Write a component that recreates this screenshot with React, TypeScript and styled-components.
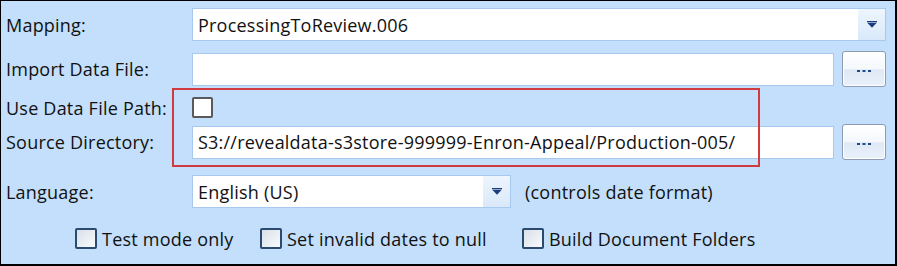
import React from "react";
import styled, { createGlobalStyle } from "styled-components";

const Global = createGlobalStyle`
  html, body { margin: 0; padding: 0; background: #ffffff; }
  #root { width: 897px; height: 266px; }
`;

const Frame = styled.div`
  position: relative;
  box-sizing: border-box;
  width: 897px;
  height: 266px;
  border: 1px solid #000;
  border-right-width: 2px;
  border-bottom-width: 2px;
  background: #c3dffb;
  padding: 7px 9px 0 5px;
  font-family: "Open Sans", "Noto Sans", sans-serif;
  font-size: 18px;
  letter-spacing: 0.22px;
  color: #111;
  display: flex;
  flex-direction: column;
`;

const Row = styled.div<{ $mt: number; $h: number }>`
  display: flex;
  align-items: center;
  margin-top: ${(p) => p.$mt}px;
  height: ${(p) => p.$h}px;
`;

const Label = styled.div`
  width: 186px;
  flex: none;
  white-space: nowrap;
`;

const Field = styled.div<{ $w?: number }>`
  box-sizing: border-box;
  height: 33px;
  ${(p) => (p.$w ? `width: ${p.$w}px; flex: none;` : "flex: 1;")}
  background: #fff;
  border: 1px solid #a8c9ef;
  display: flex;
  align-items: center;
  padding-left: 5px;
  white-space: nowrap;
  overflow: hidden;
`;

const FieldText = styled.span`
  flex: 1;
`;

const DropButton = styled.div`
  align-self: stretch;
  width: 27px;
  flex: none;
  background: linear-gradient(#eef5fd, #d9e9fa);
  display: flex;
  align-items: center;
  justify-content: center;
`;

const BrowseButton = styled.div`
  box-sizing: border-box;
  width: 44px;
  height: 36px;
  margin-left: 8px;
  flex: none;
  border: 1px solid #8b9db5;
  border-radius: 3px;
  background: linear-gradient(#ffffff 0%, #f4f8fc 50%, #dfe9f5 52%, #e9f1fa 100%);
  box-shadow: inset 0 0 0 1px #ffffff;
  display: flex;
  align-items: center;
  justify-content: center;
  padding-top: 3px;
`;

const PlainBox = styled.div`
  box-sizing: border-box;
  width: 21px;
  height: 21px;
  border: 2px solid #5a5a5a;
  border-radius: 2px;
  background: #fff;
`;

const Note = styled.div`
  margin-left: 14px;
  white-space: nowrap;
`;

const OptionRow = styled.div`
  display: flex;
  align-items: center;
  margin-top: 20px;
  height: 21px;
  padding-left: 69px;
`;

const Option = styled.label<{ $w?: number }>`
  display: flex;
  align-items: center;
  gap: 5px;
  white-space: nowrap;
  ${(p) => (p.$w ? `width: ${p.$w}px;` : "")}
`;

const OptionBox = styled.span`
  box-sizing: border-box;
  width: 22px;
  height: 21px;
  border: 2px solid #2a4a70;
  border-radius: 2px;
  background: linear-gradient(135deg, #d9e0e8, #f8fafc);
  flex: none;
`;

const Highlight = styled.div`
  position: absolute;
  left: 171px;
  top: 87px;
  width: 588px;
  height: 79px;
  box-sizing: border-box;
  border: 2px solid #d23a41;
  pointer-events: none;
`;

const Arrow = () => (
  <svg width="10" height="7" viewBox="0 0 10 7">
    <rect x="0" y="0" width="10" height="1.4" fill="#1b3d80" />
    <polygon points="0.5,2 9.5,2 5,6.8" fill="#1b3d80" />
  </svg>
);

const Dots = () => (
  <svg width="16" height="4" viewBox="0 0 16 4">
    <rect x="1" y="1" width="3" height="2" fill="#1f4a8a" />
    <rect x="6.5" y="1" width="3" height="2" fill="#1f4a8a" />
    <rect x="12" y="1" width="3" height="2" fill="#1f4a8a" />
  </svg>
);

export default function App() {
  return (
    <>
      <Global />
      <Frame>
        <Row $mt={0} $h={33}>
          <Label>Mapping:</Label>
          <Field>
            <FieldText>ProcessingToReview.006</FieldText>
            <DropButton>
              <Arrow />
            </DropButton>
          </Field>
        </Row>
        <Row $mt={10} $h={36}>
          <Label>Import Data File:</Label>
          <Field />
          <BrowseButton>
            <Dots />
          </BrowseButton>
        </Row>
        <Row $mt={10} $h={21}>
          <Label>Use Data File Path:</Label>
          <PlainBox />
        </Row>
        <Row $mt={6} $h={36}>
          <Label>Source Directory:</Label>
          <Field>
            <FieldText>S3://revealdata-s3store-999999-Enron-Appeal/Production-005/</FieldText>
          </Field>
          <BrowseButton>
            <Dots />
          </BrowseButton>
        </Row>
        <Row $mt={15} $h={33}>
          <Label>Language:</Label>
          <Field $w={319}>
            <FieldText>English (US)</FieldText>
            <DropButton>
              <Arrow />
            </DropButton>
          </Field>
          <Note>(controls date format)</Note>
        </Row>
        <OptionRow>
          <Option $w={185}>
            <OptionBox />
            Test mode only
          </Option>
          <Option $w={262}>
            <OptionBox />
            Set invalid dates to null
          </Option>
          <Option>
            <OptionBox />
            Build Document Folders
          </Option>
        </OptionRow>
        <Highlight />
      </Frame>
    </>
  );
}
